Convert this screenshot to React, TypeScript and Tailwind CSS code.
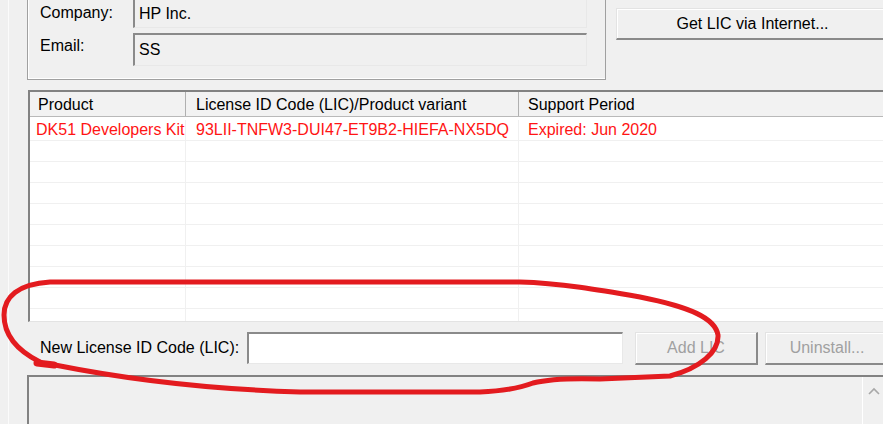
import React from "react";

const sunken =
  "border-t-2 border-l-2 border-b border-r border-t-[#8a8a8a] border-l-[#8a8a8a] border-b-[#e8e8e8] border-r-[#e8e8e8]";

const raised =
  "flex items-center justify-center bg-[#f0f0f0] border-t border-l border-b-2 border-r-2 border-t-[#e3e3e3] border-l-[#e3e3e3] border-b-[#8a8a8a] border-r-[#8a8a8a] shadow-[inset_1px_1px_0_#ffffff]";

function Button({
  label,
  disabled,
  className,
}: {
  label: string;
  disabled?: boolean;
  className: string;
}) {
  return (
    <div
      className={`${raised} ${className} ${
        disabled ? "text-[#a0a0a0]" : "text-black"
      }`}
    >
      <span className="whitespace-nowrap">{label}</span>
    </div>
  );
}

function UserGroup() {
  return (
    <div className="h-[80px] w-[579px] shrink-0 border-l border-r border-b border-[#a0a0a0] pl-[12px] shadow-[inset_1px_0_0_#ffffff,inset_0_-1px_0_#ffffff]">
      {/* Company */}
      <div className="-mt-[10px] flex h-[38px]">
        <span className="w-[93px] pt-[14px]">Company:</span>
        <div className={`h-[38px] w-[454px] bg-[#f0f0f0] pl-[4px] pt-[13px] ${sunken}`}>
          HP Inc.
        </div>
      </div>
      {/* Email */}
      <div className="mt-[5px] flex h-[33px]">
        <span className="w-[93px] pt-[4px]">Email:</span>
        <div className={`h-[33px] w-[454px] bg-[#f0f0f0] pl-[4px] pt-[6px] ${sunken}`}>
          SS
        </div>
      </div>
    </div>
  );
}

const rows = [
  {
    product: "DK51 Developers Kit",
    lic: "93LII-TNFW3-DUI47-ET9B2-HIEFA-NX5DQ",
    support: "Expired: Jun 2020",
  },
  ...Array.from({ length: 9 }, () => ({ product: "", lic: "", support: "" })),
];

function LicenseList() {
  return (
    <div className="ml-px h-[232px] w-[862px] shrink-0 overflow-hidden border-t-2 border-l-2 border-b border-t-[#828282] border-l-[#828282] border-b-[#e3e3e3] bg-white">
      {/* Header */}
      <div className="flex h-[25px] border-b border-[#b9b9b9] bg-[#f2f2f2]">
        <div className="w-[156px] shrink-0 border-r border-[#b0b0b0] pl-[8px] pt-[4px]">
          Product
        </div>
        <div className="w-[333px] shrink-0 border-r border-[#b0b0b0] pl-[10px] pt-[4px]">
          License ID Code (LIC)/Product variant
        </div>
        <div className="flex-1 pl-[9px] pt-[4px]">Support Period</div>
      </div>

      {/* Rows */}
      <div className="pt-[3px]">
        {rows.map((r, i) => (
          <div
            key={i}
            className="flex h-[21px] border-b border-[#f0f0f0] text-[#ff1414]"
          >
            <div className="w-[156px] shrink-0 border-r border-[#f0f0f0] pl-[6px] pt-[1px] whitespace-nowrap">
              {r.product}
            </div>
            <div className="w-[333px] shrink-0 border-r border-[#f0f0f0] pl-[10px] pt-[1px] whitespace-nowrap">
              {r.lic}
            </div>
            <div className="flex-1 pl-[9px] pt-[1px] whitespace-nowrap">{r.support}</div>
          </div>
        ))}
      </div>
    </div>
  );
}

export default function App() {
  return (
    <div className="relative h-[424px] w-[883px] overflow-hidden bg-[#f0f0f0] font-['Liberation_Sans',Arial,sans-serif] text-[16px] leading-[18px] text-black">
      <div className="flex h-full">
        <div className="w-[8px] shrink-0" />
        <div className="w-px shrink-0 bg-[#fbfbfb]" />
        <div className="flex w-[870px] shrink-0 flex-col pl-[18px]">
          {/* User info + internet button */}
          <div className="flex items-start">
            <UserGroup />
            <Button
              label="Get LIC via Internet..."
              className="ml-[10px] mt-[8px] h-[32px] w-[274px] shrink-0"
            />
          </div>

          <div className="mt-[10px]">
            <LicenseList />
          </div>

          {/* New LIC row */}
          <div className="mt-[10px] flex items-start">
            <span className="ml-[13px] w-[207px] shrink-0 pt-[7px] whitespace-nowrap">
              New License ID Code (LIC):
            </span>
            <div className={`h-[32px] w-[376px] shrink-0 bg-white ${sunken}`} />
            <Button
              label="Add LIC"
              disabled
              className="ml-[12px] h-[33px] w-[123px] shrink-0"
            />
            <Button
              label="Uninstall..."
              disabled
              className="ml-[7px] h-[33px] w-[125px] shrink-0"
            />
          </div>

          {/* Message panel */}
          <div className="mt-[10px] flex h-[60px] w-[858px] shrink-0 border-t-2 border-l-2 border-t-[#828282] border-l-[#828282] bg-[#f0f0f0]">
            <div className="w-[833px] shrink-0" />
            <div className="flex w-[22px] shrink-0 justify-center border-l border-white pt-[10px]">
              <svg width="12" height="8" viewBox="0 0 12 8" fill="none">
                <polyline
                  points="1,7 6,2 11,7"
                  stroke="#a8a8a8"
                  strokeWidth="1.6"
                />
              </svg>
            </div>
          </div>
        </div>
      </div>

      {/* Hand-drawn red annotation */}
      <svg
        className="pointer-events-none absolute left-0 top-0"
        width="883"
        height="424"
        viewBox="0 0 883 424"
        fill="none"
      >
        <path
          d="M 40 362 C 20 352, 4 338, 4 315 C 4 297, 18 284, 50 282 L 520 282 C 560 283, 600 290, 640 297 C 690 307, 715 318, 718 335 C 719 352, 700 368, 670 376 L 600 379 C 570 378, 545 380, 533 383 C 520 388, 505 391, 480 392 L 300 392 C 200 389, 120 378, 55 365"
          stroke="#e31b1f"
          strokeWidth="5"
          strokeLinecap="round"
          strokeLinejoin="round"
        />
        <path
          d="M 37 363 L 54 365"
          stroke="#e31b1f"
          strokeWidth="7"
          strokeLinecap="round"
        />
      </svg>
    </div>
  );
}
